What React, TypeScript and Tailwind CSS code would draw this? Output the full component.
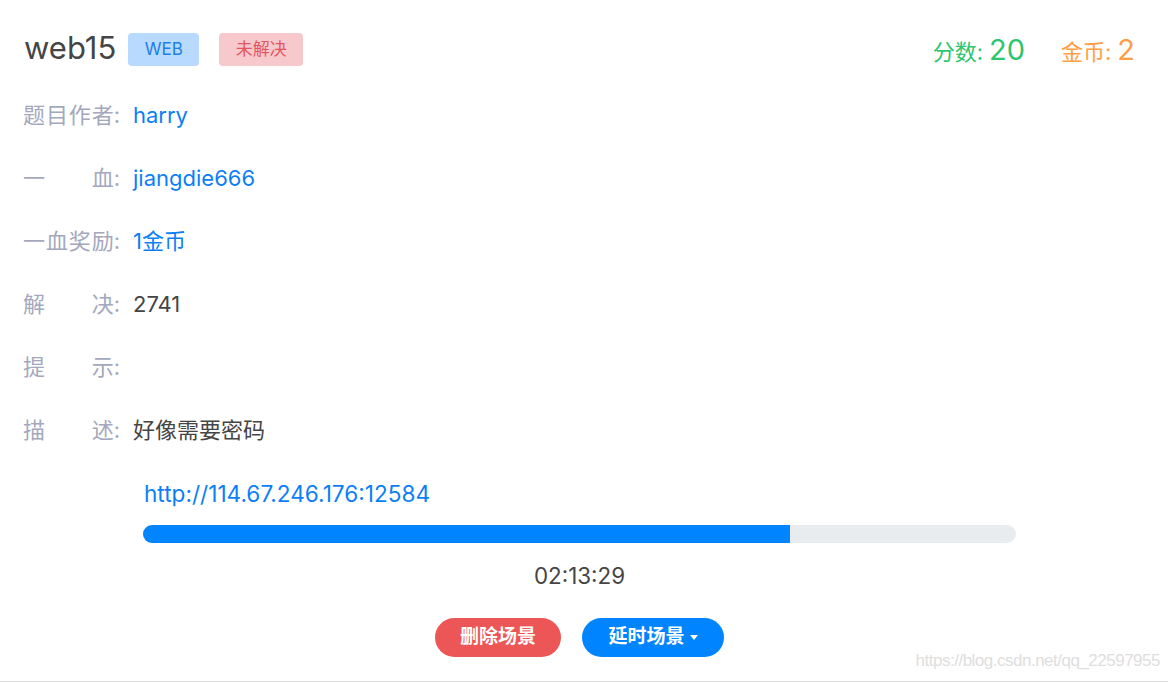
import React from "react";

const labelCls = "w-[97px] shrink-0 flex justify-between text-[#a3a8bd]";

function Row({ label, children }: { label: string[]; children?: React.ReactNode }) {
  return (
    <div className="flex items-center h-[63px]">
      <div className={labelCls}>
        {label.map((c, i) => (
          <span key={i}>{c}</span>
        ))}
      </div>
      <div className="ml-[13px]">{children}</div>
    </div>
  );
}

export default function App() {
  const progress = 74.1;
  return (
    <div
      className="relative w-[1168px] h-[682px] bg-white overflow-hidden border-b border-[#d9d9d9]"
      style={{ fontFamily: 'Inter, "Noto Sans CJK SC", sans-serif' }}
    >
      {/* header */}
      <div className="flex items-center justify-between pl-[24px] pr-[33px] pt-[28px]">
        <div className="flex items-center">
          <h1 className="text-[31px] leading-[36px] text-[#454545] -mt-[3px]">web15</h1>
          <span className="ml-[12px] h-[33px] w-[71px] flex items-center justify-center rounded-[4px] bg-[#b8daff] text-[#1c7fe8] text-[17px]">
            WEB
          </span>
          <span className="ml-[20px] h-[33px] w-[84px] flex items-center justify-center rounded-[4px] bg-[#f7c8cc] text-[#e3565f] text-[17px]">
            未解决
          </span>
        </div>
        <div className="flex items-baseline">
          <span className="text-[#2fc46e] text-[22px]">分数:</span>
          <span className="text-[#2fc46e] text-[29px] ml-[6px]">20</span>
          <span className="text-[#ff9e45] text-[22px] ml-[36px]">金币:</span>
          <span className="text-[#ff9e45] text-[29px] ml-[6px]">2</span>
        </div>
      </div>

      {/* info rows */}
      <div className="pl-[23px] mt-[12px] text-[22px]">
        <Row label={["题", "目", "作", "者:"]}>
          <span className="text-[#0d7ff5]">harry</span>
        </Row>
        <Row label={["一", "血:"]}>
          <span className="text-[#0d7ff5]">jiangdie666</span>
        </Row>
        <Row label={["一", "血", "奖", "励:"]}>
          <span className="text-[#0d7ff5]">1金币</span>
        </Row>
        <Row label={["解", "决:"]}>
          <span className="text-[#454545]">2741</span>
        </Row>
        <Row label={["提", "示:"]} />
        <Row label={["描", "述:"]}>
          <span className="text-[#454545]">好像需要密码</span>
        </Row>
      </div>

      {/* scene */}
      <div className="ml-[143px] w-[873px] mt-[17px]">
        <a className="block ml-[1px] text-[22.6px] leading-[30px] text-[#0d7ff5]">
          http://114.67.246.176:12584
        </a>
        <div className="mt-[16px] h-[18px] w-full rounded-full bg-[#e9ecef] overflow-hidden">
          <div className="h-full bg-[#0084ff]" style={{ width: `${progress}%` }} />
        </div>
        <div className="mt-[19px] text-center text-[22.4px] leading-[28px] text-[#454545]">
          02:13:29
        </div>
        <div className="mt-[28px] flex justify-center gap-[21px]">
          <button className="h-[39px] w-[126px] rounded-full bg-[#ec5656] text-white text-[19px] font-bold">
            删除场景
          </button>
          <button className="h-[39px] w-[142px] rounded-full bg-[#0084ff] text-white text-[19px] font-bold flex items-center justify-center">
            延时场景
            <span className="ml-[5px] w-0 h-0 border-l-[4px] border-r-[4px] border-t-[5px] border-l-transparent border-r-transparent border-t-white" />
          </button>
        </div>
      </div>

      <div
        className="absolute right-[8px] bottom-[8px] text-[17px] text-[#dedede] tracking-[-0.5px]"
        style={{ fontFamily: '"Liberation Sans Narrow", "Liberation Sans", sans-serif' }}
      >
        https://blog.csdn.net/qq_22597955
      </div>
    </div>
  );
}
